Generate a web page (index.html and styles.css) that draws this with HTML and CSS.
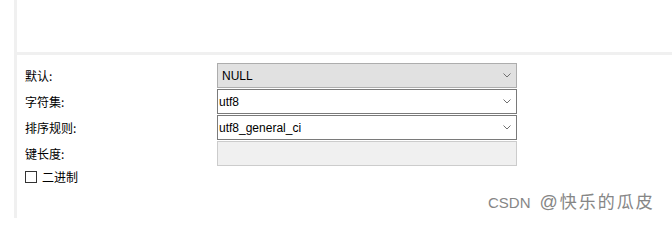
FILE: index.html
```html
<!DOCTYPE html>
<html lang="zh-CN">
<head>
<meta charset="utf-8">
<link rel="stylesheet" href="styles.css">
</head>
<body>
<div class="page">
  <div class="gutter"></div>
  <div class="vbar"></div>
  <div class="main">
    <div class="top"></div>
    <div class="hsep"></div>
    <div class="form">
      <div class="grid">
        <div class="label">默认:</div>
        <div class="combo readonly"><span class="val null">NULL</span><svg class="chev" width="8" height="5" viewBox="0 0 8 5"><polyline points="0.5,0.5 4,4 7.5,0.5" fill="none" stroke="#707070" stroke-width="1"/></svg></div>
        <div class="label">字符集:</div>
        <div class="combo"><span class="val">utf8</span><svg class="chev" width="8" height="5" viewBox="0 0 8 5"><polyline points="0.5,0.5 4,4 7.5,0.5" fill="none" stroke="#707070" stroke-width="1"/></svg></div>
        <div class="label">排序规则:</div>
        <div class="combo"><span class="val">utf8_general_ci</span><svg class="chev" width="8" height="5" viewBox="0 0 8 5"><polyline points="0.5,0.5 4,4 7.5,0.5" fill="none" stroke="#707070" stroke-width="1"/></svg></div>
        <div class="label">键长度:</div>
        <div class="field disabled"></div>
      </div>
      <div class="check-row">
        <span class="checkbox"></span>
        <span class="check-label">二进制</span>
      </div>
    </div>
  </div>
</div>
<div class="watermark"><span class="wm-latin">CSDN</span><span class="wm-at">@</span><span class="wm-cjk">快乐的瓜皮</span></div>
</body>
</html>
```

FILE: styles.css
```css
html, body {
  margin: 0;
  padding: 0;
  background: #ffffff;
}
body {
  width: 672px;
  height: 218px;
  overflow: hidden;
  position: relative;
  font-family: "Liberation Sans", "Noto Sans CJK SC", sans-serif;
  font-size: 12px;
  color: #000;
}
.page {
  display: flex;
  height: 218px;
}
.gutter {
  width: 14px;
  flex: none;
}
.vbar {
  width: 3px;
  flex: none;
  background: #f0f0f0;
}
.main {
  flex: 1;
  display: flex;
  flex-direction: column;
}
.top {
  height: 52px;
}
.hsep {
  height: 3px;
  background: #f0f0f0;
}
.form {
  padding: 8px 0 0 8px;
}
.grid {
  display: grid;
  grid-template-columns: 192px 300px;
  grid-auto-rows: 25px;
  row-gap: 1px;
}
.label {
  display: flex;
  align-items: center;
  font-family: "Noto Sans CJK SC", sans-serif;
  font-size: 12px;
  line-height: 14px;
  padding-top: 1px;
}
.combo, .field {
  box-sizing: border-box;
  height: 25px;
  border: 1px solid #7a7a7a;
  background: #fff;
  display: flex;
  align-items: center;
  justify-content: space-between;
  padding: 0 5px 0 1px;
}
.combo.readonly {
  background: #e1e1e1;
  border-color: #adadad;
  padding-left: 4px;
}
.field.disabled {
  background: #f0f0f0;
  border-color: #cccccc;
}
.val {
  font-family: "Liberation Sans", sans-serif;
  font-size: 12px;
  line-height: 14px;
}
.chev {
  display: block;
  flex: none;
}
.check-row {
  display: flex;
  align-items: center;
  height: 16px;
  margin-top: 3px;
}
.checkbox {
  box-sizing: border-box;
  width: 12px;
  height: 12px;
  border: 1px solid #333;
  background: #fff;
  flex: none;
}
.check-label {
  margin-left: 5px;
  font-family: "Noto Sans CJK SC", sans-serif;
  font-size: 12px;
  line-height: 14px;
}
.watermark {
  position: absolute;
  left: 488px;
  top: 188px;
  color: #868686;
  text-shadow: 0 0 1px #ffffff;
  display: flex;
  align-items: baseline;
  white-space: nowrap;
}
.wm-latin {
  font-family: "Liberation Sans", sans-serif;
  font-size: 15px;
}
.wm-at {
  font-family: "Liberation Sans", sans-serif;
  font-size: 18px;
  margin-left: 9px;
}
.wm-cjk {
  font-family: "Noto Sans CJK SC", sans-serif;
  font-size: 17px;
  letter-spacing: 2px;
  margin-left: 2px;
}
```
